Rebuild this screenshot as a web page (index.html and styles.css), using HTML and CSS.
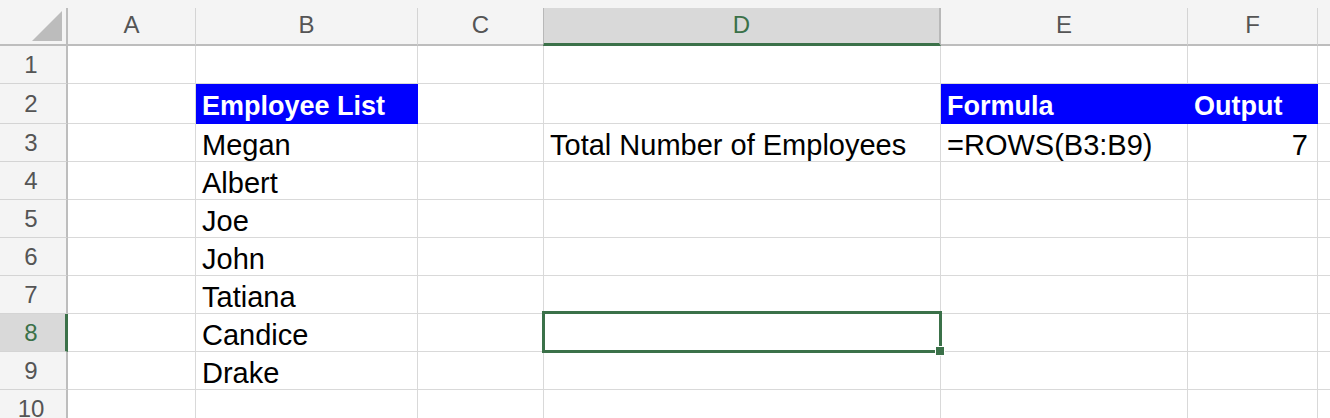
FILE: index.html
```html
<!DOCTYPE html>
<html lang="en">
<head>
  <meta charset="UTF-8">
  <title>ROWS function</title>
  <link rel="stylesheet" href="styles.css">
</head>
<body>

<div class="sheet">
  <!-- column headers -->
  <div class="corner"><span class="tri"></span></div>
  <div class="ch">A</div>
  <div class="ch">B</div>
  <div class="ch">C</div>
  <div class="ch active">D</div>
  <div class="ch">E</div>
  <div class="ch">F</div>
  <div class="ch last"></div>

  <div class="rh">1</div>
  <div class="c"></div><div class="c"></div><div class="c"></div><div class="c"></div><div class="c"></div><div class="c"></div><div class="c"></div>

  <div class="rh">2</div>
  <div class="c"></div>
  <div class="c head">Employee List</div>
  <div class="c"></div>
  <div class="c"></div>
  <div class="c head">Formula</div>
  <div class="c head">Output</div>
  <div class="c"></div>

  <div class="rh">3</div>
  <div class="c"></div>
  <div class="c">Megan</div>
  <div class="c"></div>
  <div class="c">Total Number of Employees</div>
  <div class="c">=ROWS(B3:B9)</div>
  <div class="c num">7</div>
  <div class="c"></div>

  <div class="rh">4</div>
  <div class="c"></div><div class="c">Albert</div><div class="c"></div><div class="c"></div><div class="c"></div><div class="c"></div><div class="c"></div>

  <div class="rh">5</div>
  <div class="c"></div><div class="c">Joe</div><div class="c"></div><div class="c"></div><div class="c"></div><div class="c"></div><div class="c"></div>

  <div class="rh">6</div>
  <div class="c"></div><div class="c">John</div><div class="c"></div><div class="c"></div><div class="c"></div><div class="c"></div><div class="c"></div>

  <div class="rh">7</div>
  <div class="c"></div><div class="c">Tatiana</div><div class="c"></div><div class="c"></div><div class="c"></div><div class="c"></div><div class="c"></div>

  <div class="rh active">8</div>
  <div class="c"></div>
  <div class="c">Candice</div>
  <div class="c"></div>
  <div class="c selected"><span class="sel-box"></span><span class="handle"></span></div>
  <div class="c"></div>
  <div class="c"></div>
  <div class="c"></div>

  <div class="rh">9</div>
  <div class="c"></div><div class="c">Drake</div><div class="c"></div><div class="c"></div><div class="c"></div><div class="c"></div><div class="c"></div>

  <div class="rh">10</div>
  <div class="c"></div><div class="c"></div><div class="c"></div><div class="c"></div><div class="c"></div><div class="c"></div><div class="c"></div>
</div>

</body>
</html>
```

FILE: styles.css
```css
body {
  margin: 0;
  padding: 0;
  background-color: #f4f4f4;
  font-family: "Liberation Sans", Arial, sans-serif;
  overflow: hidden;
}

.sheet {
  display: grid;
  grid-template-columns: 68px 128px 222px 126px 397px 247px 130px 1fr;
  grid-template-rows: 46px 38px 40px repeat(7, 38px) 38px;
  height: 418px;
}

.sheet > div {
  box-sizing: border-box;
}

/* column headers */
.corner, .ch {
  margin-top: 8px;
  background-color: #f4f4f4;
  border-bottom: 2px solid #bdbdbd;
}

.corner {
  position: relative;
  border-right: 2px solid #bdbdbd;
}

.tri {
  position: absolute;
  right: 4px;
  bottom: 3px;
  width: 30px;
  height: 30px;
  background-color: #bcbcbc;
  clip-path: polygon(100% 0, 100% 100%, 0 100%);
}

.ch {
  display: flex;
  align-items: center;
  justify-content: center;
  border-right: 1px solid #d4d4d4;
  font-size: 24px;
  color: #555;
  padding-bottom: 3px;
}

.ch.active {
  background-color: #d9d9d9;
  color: #3b7149;
  border-left: 1px solid #b8b8b8;
  border-right: 2px solid #b8b8b8;
  border-bottom: 3px solid #3b7149;
  margin-left: -1px;
  padding-bottom: 2px;
}

.ch.last {
  border-right: none;
}

/* row headers */
.rh {
  display: flex;
  align-items: center;
  justify-content: center;
  background-color: #f4f4f4;
  border-right: 2px solid #bdbdbd;
  border-bottom: 1px solid #d4d4d4;
  font-size: 24px;
  color: #555;
  padding: 1px 4px 0 0;
}

.rh.active {
  background-color: #d9d9d9;
  color: #3b7149;
  border-right: 3px solid #3b7149;
  padding-right: 3px;
}

/* cells */
.c {
  display: flex;
  align-items: flex-end;
  padding: 0 6px 1px 6px;
  background-color: #fff;
  border-right: 1px solid #d9d9d9;
  border-bottom: 1px solid #d9d9d9;
  font-size: 29px;
  line-height: 29px;
  color: #000;
  white-space: nowrap;
}

.c.head {
  background-color: #0000ff;
  border-right-color: #0000ff;
  border-bottom-color: #0000ff;
  color: #fff;
  font-weight: bold;
  font-size: 27px;
  padding-bottom: 2px;
}

.c.num {
  justify-content: flex-end;
  padding-right: 9px;
}

.c.selected {
  position: relative;
}

.sel-box {
  position: absolute;
  left: -2px;
  top: -3px;
  right: -2px;
  bottom: -2px;
  border: 3px solid #3b7149;
}

.handle {
  position: absolute;
  right: -5px;
  bottom: -5px;
  width: 8px;
  height: 8px;
  background-color: #3b7149;
  border: 1px solid #fff;
}
```
